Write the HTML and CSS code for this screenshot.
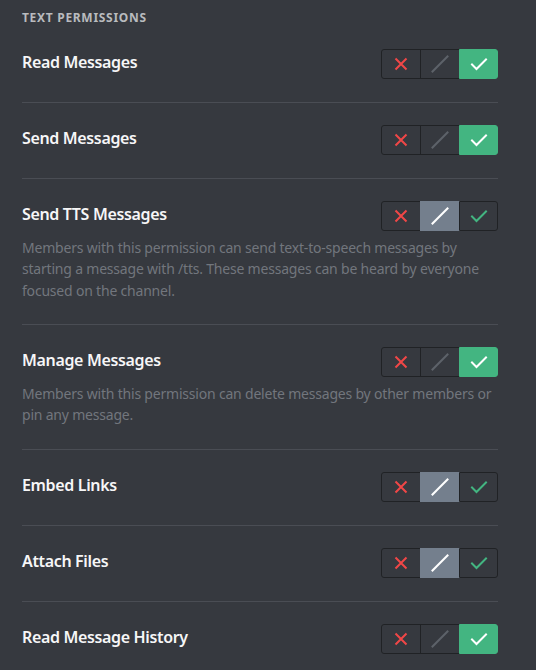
FILE: index.html
```html
<!DOCTYPE html>
<html lang="en">
<head>
    <meta charset="UTF-8">
    <meta name="viewport" content="width=device-width, initial-scale=1.0">
    <link rel="stylesheet" href="styles.css">
    <title>Text Permissions</title>
</head>
<body>
    <div class="permissoes">
        <h5 class="titulo-secao">Text Permissions</h5>

        <div class="linha">
            <div class="topo">
                <span class="nome">Read Messages</span>
                <div class="chave">
                    <div class="opcao negar"><svg viewBox="0 0 24 24"><path d="M6.5 6.5L17.5 17.5M17.5 6.5L6.5 17.5"/></svg></div>
                    <div class="opcao neutro"><svg viewBox="0 0 24 24"><path d="M4.5 19.5L19.5 4.5"/></svg></div>
                    <div class="opcao permitir ativo"><svg viewBox="0 0 24 24"><path d="M5 12.5L9.5 17L19 7.5"/></svg></div>
                </div>
            </div>
        </div>

        <div class="linha">
            <div class="topo">
                <span class="nome">Send Messages</span>
                <div class="chave">
                    <div class="opcao negar"><svg viewBox="0 0 24 24"><path d="M6.5 6.5L17.5 17.5M17.5 6.5L6.5 17.5"/></svg></div>
                    <div class="opcao neutro"><svg viewBox="0 0 24 24"><path d="M4.5 19.5L19.5 4.5"/></svg></div>
                    <div class="opcao permitir ativo"><svg viewBox="0 0 24 24"><path d="M5 12.5L9.5 17L19 7.5"/></svg></div>
                </div>
            </div>
        </div>

        <div class="linha">
            <div class="topo">
                <span class="nome">Send TTS Messages</span>
                <div class="chave">
                    <div class="opcao negar"><svg viewBox="0 0 24 24"><path d="M6.5 6.5L17.5 17.5M17.5 6.5L6.5 17.5"/></svg></div>
                    <div class="opcao neutro ativo"><svg viewBox="0 0 24 24"><path d="M4.5 19.5L19.5 4.5"/></svg></div>
                    <div class="opcao permitir"><svg viewBox="0 0 24 24"><path d="M5 12.5L9.5 17L19 7.5"/></svg></div>
                </div>
            </div>
            <p class="descricao">Members with this permission can send text-to-speech messages by starting a message with /tts. These messages can be heard by everyone focused on the channel.</p>
        </div>

        <div class="linha">
            <div class="topo">
                <span class="nome">Manage Messages</span>
                <div class="chave">
                    <div class="opcao negar"><svg viewBox="0 0 24 24"><path d="M6.5 6.5L17.5 17.5M17.5 6.5L6.5 17.5"/></svg></div>
                    <div class="opcao neutro"><svg viewBox="0 0 24 24"><path d="M4.5 19.5L19.5 4.5"/></svg></div>
                    <div class="opcao permitir ativo"><svg viewBox="0 0 24 24"><path d="M5 12.5L9.5 17L19 7.5"/></svg></div>
                </div>
            </div>
            <p class="descricao">Members with this permission can delete messages by other members or pin any message.</p>
        </div>

        <div class="linha">
            <div class="topo">
                <span class="nome">Embed Links</span>
                <div class="chave">
                    <div class="opcao negar"><svg viewBox="0 0 24 24"><path d="M6.5 6.5L17.5 17.5M17.5 6.5L6.5 17.5"/></svg></div>
                    <div class="opcao neutro ativo"><svg viewBox="0 0 24 24"><path d="M4.5 19.5L19.5 4.5"/></svg></div>
                    <div class="opcao permitir"><svg viewBox="0 0 24 24"><path d="M5 12.5L9.5 17L19 7.5"/></svg></div>
                </div>
            </div>
        </div>

        <div class="linha">
            <div class="topo">
                <span class="nome">Attach Files</span>
                <div class="chave">
                    <div class="opcao negar"><svg viewBox="0 0 24 24"><path d="M6.5 6.5L17.5 17.5M17.5 6.5L6.5 17.5"/></svg></div>
                    <div class="opcao neutro ativo"><svg viewBox="0 0 24 24"><path d="M4.5 19.5L19.5 4.5"/></svg></div>
                    <div class="opcao permitir"><svg viewBox="0 0 24 24"><path d="M5 12.5L9.5 17L19 7.5"/></svg></div>
                </div>
            </div>
        </div>

        <div class="linha">
            <div class="topo">
                <span class="nome">Read Message History</span>
                <div class="chave">
                    <div class="opcao negar"><svg viewBox="0 0 24 24"><path d="M6.5 6.5L17.5 17.5M17.5 6.5L6.5 17.5"/></svg></div>
                    <div class="opcao neutro"><svg viewBox="0 0 24 24"><path d="M4.5 19.5L19.5 4.5"/></svg></div>
                    <div class="opcao permitir ativo"><svg viewBox="0 0 24 24"><path d="M5 12.5L9.5 17L19 7.5"/></svg></div>
                </div>
            </div>
        </div>
    </div>
</body>
</html>
```

FILE: styles.css
```css
body, html {
    margin: 0;
    padding: 0;
    background-color: #36393f;
    font-family: "Noto Sans", "Open Sans", sans-serif;
}

.permissoes {
    width: 476px;
    padding: 10px 0 0 22px;
}

.titulo-secao {
    margin: 0;
    font-size: 12px;
    line-height: 16px;
    font-weight: 700;
    text-transform: uppercase;
    letter-spacing: 0.7px;
    color: #b9bbbe;
}

.linha {
    border-top: 1px solid #4a4d54;
    padding: 22px 0 23px;
}

.linha:first-of-type {
    border-top-color: transparent;
}

.topo {
    display: flex;
    justify-content: space-between;
    align-items: flex-start;
}

.nome {
    padding-top: 3px;
    font-size: 16px;
    line-height: 20px;
    font-weight: 600;
    letter-spacing: -0.35px;
    color: #f6f6f7;
}

.descricao {
    margin: 5.5px 0 0;
    font-size: 14px;
    line-height: 21.5px;
    letter-spacing: -0.2px;
    color: #72767d;
}

.chave {
    display: flex;
    height: 30px;
}

.opcao {
    box-sizing: border-box;
    width: 40px;
    height: 30px;
    border: 1px solid #202225;
    display: flex;
    align-items: center;
    justify-content: center;
}

.opcao + .opcao {
    margin-left: -1px;
}

.opcao:first-child {
    border-radius: 3px 0 0 3px;
}

.opcao:last-child {
    width: 39px;
    border-radius: 0 3px 3px 0;
}

.opcao svg {
    width: 24px;
    height: 24px;
    fill: none;
    stroke-width: 2;
    stroke-linecap: square;
}

.negar svg {
    stroke: #f04747;
    stroke-linecap: butt;
}

.neutro svg {
    stroke: #5d6269;
}

.permitir svg {
    stroke: #43b581;
}

.neutro.ativo {
    background-color: #747f8d;
    border-color: #747f8d;
}

.permitir.ativo {
    background-color: #43b581;
    border-color: #43b581;
}

.ativo svg {
    stroke: #fff;
}
```
